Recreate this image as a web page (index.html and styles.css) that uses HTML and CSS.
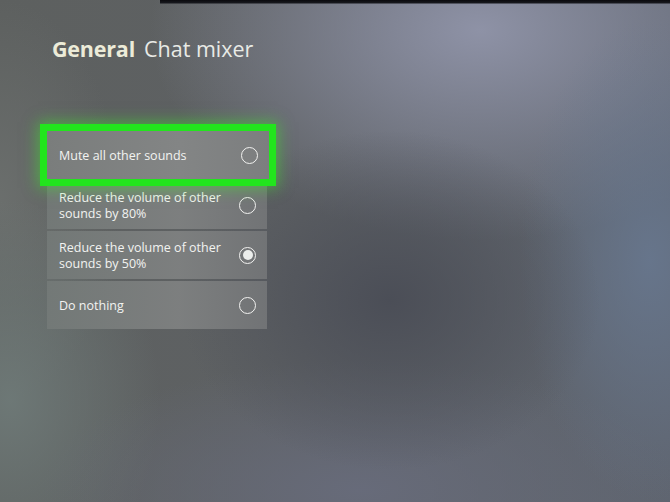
FILE: index.html
```html
<!DOCTYPE html>
<html lang="en">
<head>
<meta charset="utf-8">
<title>General Chat mixer</title>
<link rel="stylesheet" href="styles.css">
</head>
<body>
<div class="screen">
  <h1 class="title"><span class="title-main">General</span><span class="title-sub">Chat mixer</span></h1>
  <ul class="options">
    <li class="option focused">
      <span class="label">Mute all other sounds</span>
      <span class="radio"></span>
    </li>
    <li class="option">
      <span class="label">Reduce the volume of other sounds by 80%</span>
      <span class="radio"></span>
    </li>
    <li class="option">
      <span class="label">Reduce the volume of other sounds by 50%</span>
      <span class="radio checked"></span>
    </li>
    <li class="option">
      <span class="label">Do nothing</span>
      <span class="radio"></span>
    </li>
  </ul>
</div>
</body>
</html>
```
FILE: styles.css
```css
html, body {
  margin: 0;
  padding: 0;
}
body {
  width: 670px;
  height: 502px;
  overflow: hidden;
  font-family: "Open Sans", "Noto Sans", sans-serif;
}
.screen {
  box-sizing: border-box;
  width: 670px;
  height: 502px;
  padding: 34px 0 0 47px;
  background:
    linear-gradient(to bottom, #0a0a0e 0, #18191e 3px, transparent 4px) no-repeat 160px 0 / 510px 5px,
    radial-gradient(ellipse 210px 170px at 390px 300px, rgba(74,77,86,0.95), rgba(74,77,86,0) 100%),
    radial-gradient(ellipse 130px 240px at 650px 260px, rgba(104,120,144,0.85), rgba(104,120,144,0) 100%),
    radial-gradient(ellipse 330px 210px at 480px 30px, rgba(142,146,166,1), rgba(142,146,166,0) 100%),
    radial-gradient(ellipse 320px 130px at 360px 490px, rgba(104,108,124,0.9), rgba(104,108,124,0) 100%),
    radial-gradient(ellipse 150px 200px at 10px 400px, rgba(112,124,122,0.85), rgba(112,124,122,0) 100%),
    radial-gradient(ellipse 120px 200px at 0px 200px, rgba(110,114,112,0.8), rgba(110,114,112,0) 100%),
    linear-gradient(to right, #5d605f 0%, #5e6164 45%, #5f6570 100%);
}
.title {
  margin: 0 0 0 5px;
  font-weight: 400;
  font-size: 21.5px;
  line-height: 30px;
  color: #e9eae2;
  display: flex;
  gap: 9px;
  align-items: baseline;
}
.title-main {
  font-weight: 700;
  color: #ecebd8;
  letter-spacing: -0.2px;
}
.title-sub {
  color: #e8eae6;
}
.options {
  list-style: none;
  margin: 67px 0 0 0;
  padding: 0;
  width: 220px;
  display: flex;
  flex-direction: column;
  gap: 2px;
}
.option {
  box-sizing: border-box;
  height: 48px;
  padding: 2px 11px 0 12px;
  display: flex;
  align-items: center;
  justify-content: space-between;
  gap: 12px;
  background: linear-gradient(to right, rgba(116,122,120,0.9), rgba(128,130,130,0.9) 60%, rgba(116,118,120,0.9));
  color: #f2f3f1;
  font-size: 12.5px;
  line-height: 16px;
}
.option .label {
  max-width: 170px;
}
.option.focused {
  margin-right: -2px;
  background: linear-gradient(to right, #7a7d7c, #838585 60%, #7c7e7f);
  outline: 6px solid #22e51d;
  box-shadow: 0 0 0 7px #22e51d, 0 0 14px 9px rgba(60,240,40,0.5);
  position: relative;
  z-index: 1;
}
.radio {
  flex: none;
  box-sizing: border-box;
  width: 17px;
  height: 17px;
  margin-top: -2px;
  border: 1.5px solid #f2f2f0;
  border-radius: 50%;
  display: flex;
  align-items: center;
  justify-content: center;
}
.radio.checked::after {
  content: "";
  width: 10px;
  height: 10px;
  border-radius: 50%;
  background: #eceeec;
}
```
